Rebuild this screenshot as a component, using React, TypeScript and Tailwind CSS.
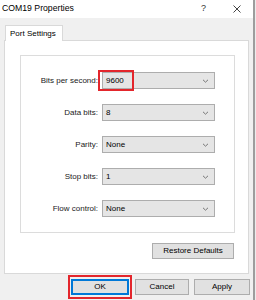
const font = { fontFamily: '"Liberation Sans", Arial, sans-serif' };

const Chevron = () => (
  <svg width="7" height="4" viewBox="0 0 7 4" fill="none" aria-hidden="true">
    <path d="M1 0.8L3.5 3.2L6 0.8" stroke="#6a6a6a" strokeWidth="0.9" />
  </svg>
);

const Combo = ({ value, highlight }: { value: string; highlight?: boolean }) => (
  <div className="relative flex h-[17px] w-[113px] items-center justify-between border border-[#adadad] bg-[#e5e5e5] pl-[3px] pr-[5px] text-[8px] text-black">
    <span>{value}</span>
    <Chevron />
    {highlight && (
      <div className="absolute left-[-5px] top-[-3px] h-[21px] w-[36px] border-2 border-[#e3262c]" />
    )}
  </div>
);

const Row = ({ label, value, highlight }: { label: string; value: string; highlight?: boolean }) => (
  <div className="flex items-center justify-end gap-[4px] pr-[19px]">
    <span className="text-[8px] text-[#1a1a1a]">{label}</span>
    <Combo value={value} highlight={highlight} />
  </div>
);

const Button = ({ label, className }: { label: string; className: string }) => (
  <div
    className={`flex h-[16px] items-center justify-center border bg-[#e1e1e1] text-[8px] text-black ${className}`}
  >
    {label}
  </div>
);

export default function App() {
  return (
    <div className="flex h-[300px] w-[256px] bg-[#f0f0f0]" style={font}>
      <div className="flex w-[253px] flex-col">
        {/* title bar */}
        <div className="flex h-[18px] items-center bg-white pl-[2px]">
          <span className="text-[8.7px] text-black">COM19 Properties</span>
          <span className="ml-auto mr-[27px] text-[9px] text-[#333]">?</span>
          <svg width="8" height="8" viewBox="0 0 8 8" className="mr-[12px]" aria-hidden="true">
            <path d="M0.5 0.5L7.5 7.5M7.5 0.5L0.5 7.5" stroke="#444" strokeWidth="1" />
          </svg>
        </div>

        {/* tabs */}
        <div className="pl-[4px] pt-[7px]">
          <div className="relative z-10 -mb-px ml-[1px] flex h-[16px] w-[58px] items-center border border-b-0 border-[#d9d9d9] bg-white pl-[4px] text-[8px] text-black">
            Port Settings
          </div>
          <div className="flex h-[234px] w-[245px] flex-col border border-[#d9d9d9] bg-white pl-[15px] pr-[13px] pt-[14px]">
            <div className="flex h-[178px] flex-col gap-[15px] border border-[#dcdcdc] pt-[16px]">
              <Row label="Bits per second:" value="9600" highlight />
              <Row label="Data bits:" value="8" />
              <Row label="Parity:" value="None" />
              <Row label="Stop bits:" value="1" />
              <Row label="Flow control:" value="None" />
            </div>
            <div className="mt-[10px] flex justify-end pr-[1px]">
              <Button label="Restore Defaults" className="w-[82px] border-[#adadad]" />
            </div>
          </div>
        </div>

        {/* dialog buttons */}
        <div className="ml-[71px] mt-[5px] flex">
          <div className="relative">
            <Button label="OK" className="w-[58px] border-2 border-[#0078d7]" />
            <div className="absolute bottom-[-4px] left-[-3px] right-[-3px] top-[-4px] border-2 border-[#e3262c]" />
          </div>
          <Button label="Cancel" className="ml-[6px] w-[54px] border-[#adadad]" />
          <Button label="Apply" className="ml-[5px] w-[56px] border-[#adadad]" />
        </div>
      </div>
      <div className="w-[2px] bg-[#9d9d9d]" />
      <div className="w-[1px] bg-[#ececec]" />
    </div>
  );
}
